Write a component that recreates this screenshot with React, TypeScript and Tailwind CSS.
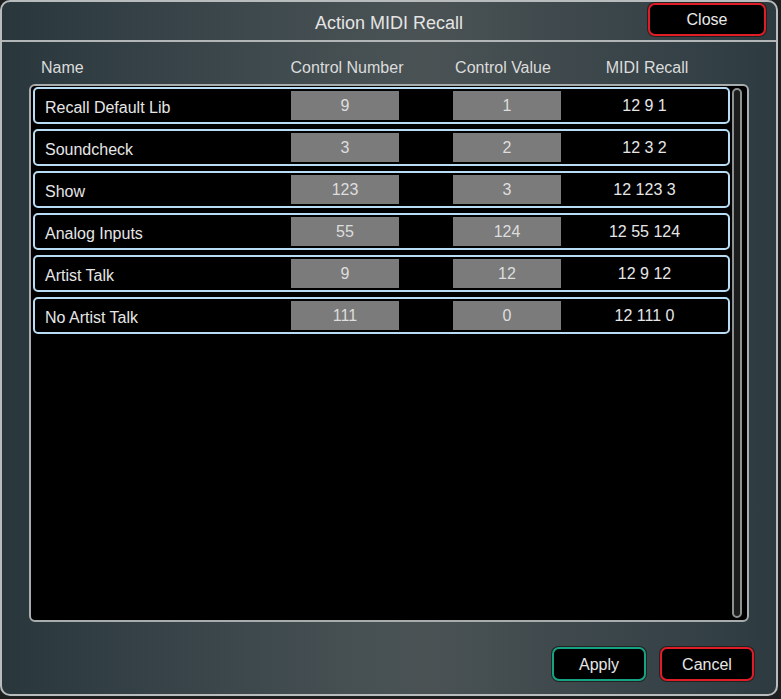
import React from "react";

const rows = [
  { name: "Recall Default Lib", num: "9", val: "1", midi: "12 9 1" },
  { name: "Soundcheck", num: "3", val: "2", midi: "12 3 2" },
  { name: "Show", num: "123", val: "3", midi: "12 123 3" },
  { name: "Analog Inputs", num: "55", val: "124", midi: "12 55 124" },
  { name: "Artist Talk", num: "9", val: "12", midi: "12 9 12" },
  { name: "No Artist Talk", num: "111", val: "0", midi: "12 111 0" },
];

const font = { fontFamily: '"Liberation Sans", Arial, sans-serif' };

export default function App() {
  return (
    <div className="w-[781px] h-[699px] bg-[#1d1f20] overflow-hidden" style={font}>
      <div className="w-[778px] h-[696px] rounded-[10px] border-2 border-[#b9bcbd] bg-[linear-gradient(to_right,#29373d_0%,#465053_45%,#4a5254_55%,#2d3b41_100%)] flex flex-col">
        {/* Header */}
        <div className="h-[38px] grid grid-cols-[1fr_auto_1fr] items-center border-b-2 border-[#b3b6b7] box-content">
          <div />
          <div className="text-[18px] text-[#e4e4e4] pt-[4px] whitespace-nowrap">Action MIDI Recall</div>
          <div className="flex justify-end pr-[10px]">
            <button className="w-[118px] h-[33px] rounded-[7px] border-2 border-[#e01c26] bg-black text-[16px] text-[#eaeaea] shadow-[0_0_0_1px_#222] -mt-[3px]">
              Close
            </button>
          </div>
        </div>

        {/* Column headers */}
        <div className="h-[42px] flex items-end pb-[4px] text-[16px] text-[#dcdcdc] pl-[39px] whitespace-nowrap">
          <div className="w-[246px]">Name</div>
          <div className="w-[120px] text-center">Control Number</div>
          <div className="w-[40px]" />
          <div className="w-[112px] text-center">Control Value</div>
          <div className="w-[42px]" />
          <div className="w-[92px] text-center">MIDI Recall</div>
        </div>

        {/* List */}
        <div className="ml-[27px] w-[720px] h-[538px] rounded-[6px] border-2 border-[#a9acad] bg-black flex pt-[1px] pl-[2px] pr-[5px] pb-[3px] gap-[2px]">
          <div className="flex-1 flex flex-col gap-[5px]">
            {rows.map((r) => (
              <div
                key={r.name}
                className="h-[37px] rounded-[5px] border-2 border-[#b7dcf3] flex items-center text-[16px] whitespace-nowrap"
              >
                <div className="w-[256px] pl-[10px] pt-[4px] text-[#e6e6e6]">{r.name}</div>
                <div className="w-[108px] h-[29px] bg-[#7b7b7b] flex items-center justify-center text-[16px] text-[#dedede]">
                  {r.num}
                </div>
                <div className="w-[54px]" />
                <div className="w-[108px] h-[29px] bg-[#7b7b7b] flex items-center justify-center text-[16px] text-[#dedede]">
                  {r.val}
                </div>
                <div className="flex-1 text-center text-[16px] text-[#e6e6e6]">{r.midi}</div>
              </div>
            ))}
          </div>
          <div className="w-[10px] h-[530px] mt-[1px] rounded-full border-2 border-[#8e9192] bg-[#1c1c1c]" />
        </div>

        {/* Footer */}
        <div className="flex-1 flex justify-end items-start pt-[25px] pr-[22px] gap-[14px]">
          <button className="w-[94px] h-[34px] rounded-[7px] border-2 border-[#16a383] bg-black text-[16px] text-[#e6e6e6] shadow-[0_0_0_1px_#222] pt-[2px]">
            Apply
          </button>
          <button className="w-[94px] h-[34px] rounded-[7px] border-2 border-[#e01c26] bg-black text-[16px] text-[#e6e6e6] shadow-[0_0_0_1px_#222] pt-[2px]">
            Cancel
          </button>
        </div>
      </div>
    </div>
  );
}
